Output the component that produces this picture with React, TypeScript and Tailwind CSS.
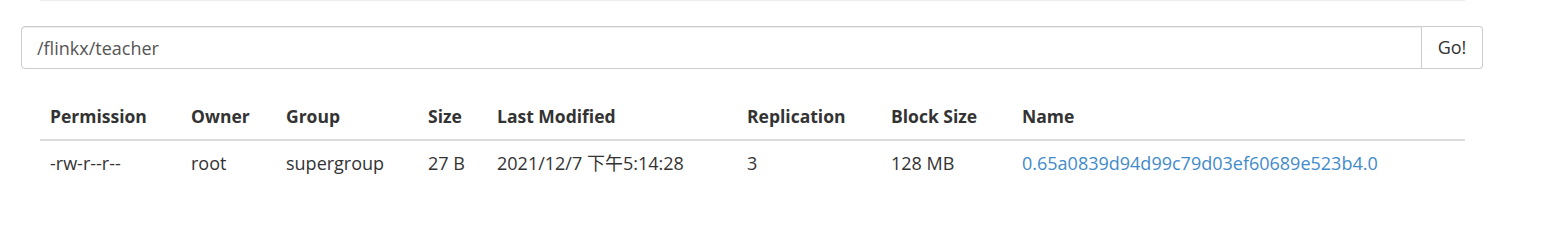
import React from "react";

const cols = [
  { label: "Permission", w: "w-[141px]" },
  { label: "Owner", w: "w-[95px]" },
  { label: "Group", w: "w-[142px]" },
  { label: "Size", w: "w-[69px]" },
  { label: "Last Modified", w: "w-[250px]" },
  { label: "Replication", w: "w-[144px]" },
  { label: "Block Size", w: "w-[131px]" },
  { label: "Name", w: "" },
];

export default function App() {
  return (
    <div
      className="w-[1548px] h-[225px] bg-white text-[#333] text-[18px]"
      style={{ fontFamily: '"Open Sans", "Noto Sans CJK SC", sans-serif' }}
    >
      <div className="ml-[40px] w-[1425px] border-t border-[#eeeeee]" />
      <div className="ml-[21px] mt-[25px] flex w-[1462px] h-[43px]">
        <input
          readOnly
          value="/flinkx/teacher"
          className="flex-1 h-full rounded-l-[4px] border border-[#cccccc] px-[15px] text-[18px] text-[#555] outline-none shadow-[inset_0_1px_1px_rgba(0,0,0,0.075)]"
          style={{ fontFamily: '"Open Sans", sans-serif' }}
        />
        <button className="w-[61px] h-full rounded-r-[4px] border border-l-0 border-[#cccccc] bg-white text-[18px] text-[#333]">
          Go!
        </button>
      </div>
      <table className="ml-[40px] mt-[31px] w-[1425px] table-fixed border-collapse">
        <colgroup>
          {cols.map((c) => (
            <col key={c.label} className={c.w} />
          ))}
        </colgroup>
        <thead>
          <tr>
            {cols.map((c) => (
              <th
                key={c.label}
                className="text-left font-bold text-[17.5px] px-[10px] pt-[6px] pb-[12px] border-b-2 border-[#dddddd] leading-[21px] whitespace-nowrap"
              >
                {c.label}
              </th>
            ))}
          </tr>
        </thead>
        <tbody>
          <tr>
            {["-rw-r--r--", "root", "supergroup", "27 B", "2021/12/7 下午5:14:28", "3", "128 MB"].map(
              (t, i) => (
                <td key={i} className="px-[10px] py-[12px] leading-[21px] whitespace-nowrap">
                  {t}
                </td>
              )
            )}
            <td className="px-[10px] py-[12px] leading-[21px] whitespace-nowrap">
              <a className="text-[#428bca]" href="#">
                0.65a0839d94d99c79d03ef60689e523b4.0
              </a>
            </td>
          </tr>
        </tbody>
      </table>
    </div>
  );
}
